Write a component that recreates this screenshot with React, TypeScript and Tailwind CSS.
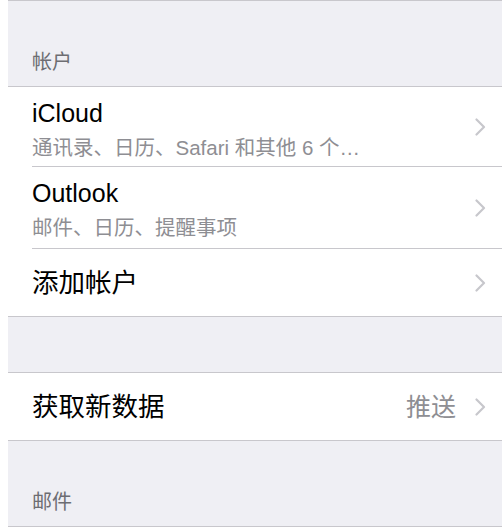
import React from 'react';

const font = { fontFamily: '"Liberation Sans", "Noto Sans CJK SC", sans-serif' };

const Chevron: React.FC = () => (
  <svg width="11" height="18" viewBox="0 0 11 18" className="shrink-0">
    <path d="M1.5 1.5 L9 9 L1.5 16.5" fill="none" stroke="#c7c7cc" strokeWidth="2.2" strokeLinecap="round" strokeLinejoin="round" />
  </svg>
);

const SectionHeader: React.FC<{ title: string }> = ({ title }) => (
  <div className="h-[85px] flex items-end px-6 pb-[12px] text-[20px] leading-[24px] text-[#6d6d72]">{title}</div>
);

const App: React.FC = () => {
  const accounts = [
    { title: 'iCloud', sub: '通讯录、日历、Safari 和其他 6 个…', h: 'h-[80px]' },
    { title: 'Outlook', sub: '邮件、日历、提醒事项', h: 'h-[82px]' },
  ];

  return (
    <div className="h-[532px] overflow-hidden bg-white pl-2" style={font}>
      <div className="bg-[#efeff4] border-t border-[#c8c7cc]">
        <SectionHeader title="帐户" />

        {/* 帐户 */}
        <div className="bg-white border-t border-b border-[#c8c7cc]">
          {accounts.map((a) => (
            <div key={a.title} className={`ml-6 ${a.h} border-b border-[#c8c7cc] flex items-center pr-[16px]`}>
              <div className="flex-1 self-start pt-[11px]">
                <div className="text-[25px] leading-[30px] text-black">{a.title}</div>
                <div className="mt-[8px] text-[20.5px] leading-[24px] text-[#8e8e93]">{a.sub}</div>
              </div>
              <Chevron />
            </div>
          ))}
          <div className="ml-6 h-[67px] flex items-center pr-[16px]">
            <div className="flex-1 text-[26.5px] leading-[32px] text-black">添加帐户</div>
            <Chevron />
          </div>
        </div>

        <div className="h-[55px]" />

        {/* 获取新数据 */}
        <div className="bg-white border-t border-b border-[#c8c7cc]">
          <div className="ml-6 h-[67px] flex items-center pr-[16px]">
            <div className="flex-1 text-[26.5px] leading-[32px] text-black">获取新数据</div>
            <div className="mr-[19px] text-[25px] leading-[32px] text-[#8e8e93]">推送</div>
            <Chevron />
          </div>
        </div>

        <SectionHeader title="邮件" />
      </div>
      <div className="border-t border-[#c8c7cc] h-[20px] bg-white" />
    </div>
  );
};

export default App;
